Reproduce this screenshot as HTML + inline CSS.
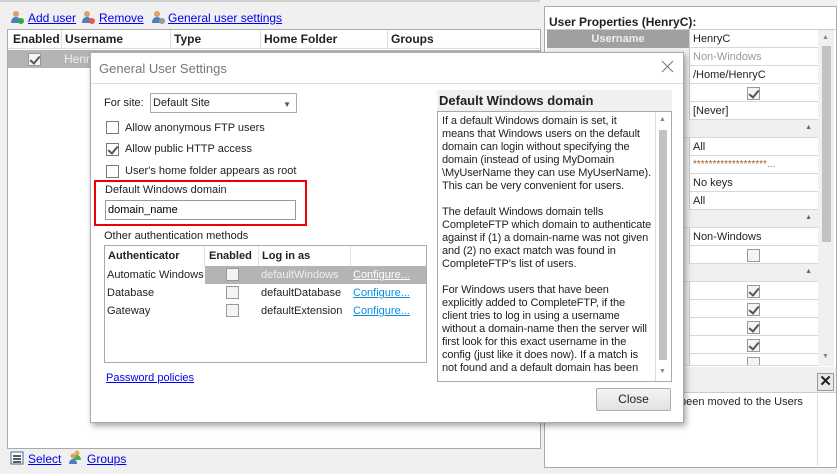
<!DOCTYPE html>
<html><head><meta charset="utf-8"><style>
*{box-sizing:border-box;margin:0;padding:0}
body{width:837px;height:474px;overflow:hidden;background:#f0f0f0;font-family:"Liberation Sans",Tahoma,sans-serif;font-size:11px;color:#222;position:relative}
.a{position:absolute}
a,.lnk{color:#0000ee;text-decoration:underline}
.cb{position:absolute;width:13px;height:13px;border:1px solid #7a7a7a;background:#fff}
.cb.g{border-color:#999;background:#f4f4f4}
.ck::after{content:"";position:absolute;left:3px;top:0px;width:4px;height:8px;border:solid #555;border-width:0 2px 2px 0;transform:rotate(40deg)}
.row{position:absolute;left:547px;width:271px;height:18px;border-bottom:1px solid #d8d8d8}
.row .k{position:absolute;left:0;top:0;width:143px;height:18px;background:#f0f0f0;border-right:1px solid #ccc}
.row .v{position:absolute;left:146px;top:3px}
.row.h{background:#f0f0f0}
.row.h::after{content:"▲";position:absolute;right:6px;top:4px;font-size:7px;color:#666}
.ico{position:absolute;width:14px;height:14px}
</style></head><body>
<div class="a" style="left:0;top:0;width:540px;height:2px;background:#d0d0d0"></div>
<svg class="ico" style="left:10px;top:10px" viewBox="0 0 14 14"><circle cx="6" cy="4" r="3" fill="#d9a070"/><path d="M1 13c0-4 2-6 5-6s5 2 5 6z" fill="#4a7fc0"/><circle cx="11" cy="11" r="3" fill="#3a3"/></svg>
<span class="a lnk" style="left:28px;top:11px;font-size:12px">Add user</span>
<svg class="ico" style="left:81px;top:10px" viewBox="0 0 14 14"><circle cx="6" cy="4" r="3" fill="#d9a070"/><path d="M1 13c0-4 2-6 5-6s5 2 5 6z" fill="#4a7fc0"/><circle cx="11" cy="11" r="3" fill="#e55"/></svg>
<span class="a lnk" style="left:99px;top:11px;font-size:12px">Remove</span>
<svg class="ico" style="left:151px;top:10px" viewBox="0 0 14 14"><circle cx="6" cy="4" r="3" fill="#d9a070"/><path d="M1 13c0-4 2-6 5-6s5 2 5 6z" fill="#4a7fc0"/><circle cx="11" cy="11" r="3" fill="#999"/></svg>
<span class="a lnk" style="left:168px;top:11px;font-size:12px">General user settings</span>
<div class="a" style="left:7px;top:29px;width:534px;height:420px;border:1px solid #aaa;background:#fff"></div>
<div class="a" style="left:8px;top:30px;width:532px;height:19px;background:#fff;border-bottom:1px solid #ddd;font-weight:bold;font-size:12px">
<span class="a" style="left:5px;top:2px">Enabled</span><span class="a" style="left:57px;top:2px">Username</span><span class="a" style="left:166px;top:2px">Type</span><span class="a" style="left:256px;top:2px">Home Folder</span><span class="a" style="left:383px;top:2px">Groups</span>
<div class="a" style="left:53px;top:0;width:1px;height:19px;background:#ddd"></div><div class="a" style="left:162px;top:0;width:1px;height:19px;background:#ddd"></div><div class="a" style="left:252px;top:0;width:1px;height:19px;background:#ddd"></div><div class="a" style="left:379px;top:0;width:1px;height:19px;background:#ddd"></div>
</div>
<div class="a" style="left:8px;top:50px;width:532px;height:18px;background:#b4b4b4"></div>
<div class="cb g ck" style="left:28px;top:53px"></div>
<span class="a" style="left:64px;top:52px;color:#eee;font-size:12px">HenryC</span>
<svg class="ico" style="left:10px;top:451px" viewBox="0 0 14 14"><rect x="1" y="1" width="12" height="12" fill="#fff" stroke="#3a6ea5"/><path d="M3 5h8M3 8h8M3 11h8" stroke="#222" stroke-width="1.5"/></svg>
<span class="a lnk" style="left:28px;top:452px;font-size:12px">Select</span>
<svg class="ico" style="left:68px;top:450px" viewBox="0 0 14 14"><circle cx="9" cy="3" r="2.5" fill="#e0b050"/><path d="M5 10c0-3 2-5 4-5s4 2 4 5z" fill="#5a5"/><circle cx="5" cy="6" r="2.5" fill="#d9a070"/><path d="M1 14c0-3 2-5 4-5s4 2 4 5z" fill="#4a7fc0"/></svg>
<span class="a lnk" style="left:87px;top:452px;font-size:12px">Groups</span>
<div class="a" style="left:544px;top:6px;width:293px;height:462px;border:1px solid #aaa;background:#fff"></div>
<span class="a" style="left:549px;top:15px;font-weight:bold;font-size:12px">User Properties (HenryC):</span>
<div class="a" style="left:546px;top:29px;width:290px;height:338px;border-top:1px solid #ccc;background:#fff"></div>
<div class="row"style="top:30px"><div class="k" style="background:#a0a0a0;color:#eee;font-weight:bold;text-align:center;padding-top:3px">Username</div><span class="v">HenryC</span></div>
<div class="row"style="top:48px"><div class="k"></div><span class="v" style="color:#999">Non-Windows</span></div>
<div class="row"style="top:66px"><div class="k"></div><span class="v">/Home/HenryC</span></div>
<div class="row"style="top:84px"><div class="k"></div><div class="cb g ck" style="left:200px;top:3px"></div></div>
<div class="row"style="top:102px"><div class="k"></div><span class="v">[Never]</span></div>
<div class="row h"style="top:120px"></div>
<div class="row"style="top:138px"><div class="k"></div><span class="v">All</span></div>
<div class="row"style="top:156px"><div class="k"></div><span class="v" style="color:#a06030;font-size:10px;top:3px">*******************...</span></div>
<div class="row"style="top:174px"><div class="k"></div><span class="v">No keys</span></div>
<div class="row"style="top:192px"><div class="k"></div><span class="v">All</span></div>
<div class="row h"style="top:210px"></div>
<div class="row"style="top:228px"><div class="k"></div><span class="v">Non-Windows</span></div>
<div class="row"style="top:246px"><div class="k"></div><div class="cb g" style="left:200px;top:3px"></div></div>
<div class="row h"style="top:264px"></div>
<div class="row"style="top:282px"><div class="k"></div><div class="cb g ck" style="left:200px;top:3px"></div></div>
<div class="row"style="top:300px"><div class="k"></div><div class="cb g ck" style="left:200px;top:3px"></div></div>
<div class="row"style="top:318px"><div class="k"></div><div class="cb g ck" style="left:200px;top:3px"></div></div>
<div class="row"style="top:336px"><div class="k"></div><div class="cb g ck" style="left:200px;top:3px"></div></div>
<div class="row"style="top:354px;height:12px;overflow:hidden"><div class="k"></div><div class="cb g" style="left:200px;top:3px"></div></div>
<div class="a" style="left:818px;top:30px;width:16px;height:336px;background:#f0f0f0"></div>
<div class="a" style="left:822px;top:46px;width:9px;height:196px;background:#c2c2c2"></div>
<span class="a" style="left:822px;top:34px;font-size:7px;color:#888">▲</span><span class="a" style="left:822px;top:353px;font-size:7px;color:#888">▼</span>
<div class="a" style="left:545px;top:367px;width:291px;height:5px;background:#f0f0f0"></div>
<div class="a" style="left:545px;top:372px;width:291px;height:21px;background:#f0f0f0;border-bottom:1px solid #ccc"></div>
<span class="a" style="left:678px;top:376px;font-weight:bold">s</span>
<div class="a" style="left:817px;top:373px;width:17px;height:18px;border:1px solid #999;background:#e8e8e8;text-align:center;font-weight:bold;font-size:15px;line-height:16px">✕</div>
<span class="a" style="left:680px;top:396px">been moved to the Users</span>
<div class="a" style="left:817px;top:394px;width:1px;height:72px;background:#ddd"></div>
<div class="a" style="left:90px;top:52px;width:594px;height:371px;background:#fff;border:1px solid #aaa;box-shadow:2px 3px 6px rgba(0,0,0,.35)">
<span class="a" style="left:8px;top:8px;font-size:13px;color:#777">General User Settings</span>
<svg class="a" style="left:570px;top:7px" width="13" height="13" viewBox="0 0 13 13"><path d="M1 1L12 12M12 1L1 12" stroke="#777" stroke-width="1"/></svg>
<div class="a" style="left:0;top:30px;width:592px;height:1px;background:#ddd"></div>
<span class="a" style="left:13px;top:44px">For site:</span>
<div class="a" style="left:59px;top:40px;width:147px;height:20px;border:1px solid #aaa;padding:3px 2px">Default Site<span class="a" style="right:5px;top:6px;font-size:8px;color:#555">▼</span></div>
<div class="cb" style="left:15px;top:68px"></div><span class="a" style="left:34px;top:69px">Allow anonymous FTP users</span>
<div class="cb ck" style="left:15px;top:90px"></div><span class="a" style="left:34px;top:90px">Allow public HTTP access</span>
<div class="cb" style="left:15px;top:112px"></div><span class="a" style="left:34px;top:112px">User's home folder appears as root</span>
<div class="a" style="left:3px;top:127px;width:213px;height:46px;border:2px solid #e00"></div>
<span class="a" style="left:14px;top:131px">Default Windows domain</span>
<div class="a" style="left:14px;top:147px;width:191px;height:20px;border:1px solid #999;padding:3px 2px;color:#000">domain_name</div>
<span class="a" style="left:13px;top:177px">Other authentication methods</span>
<div class="a" style="left:13px;top:192px;width:323px;height:118px;border:1px solid #aaa"></div>
<div class="a" style="left:14px;top:193px;width:321px;height:20px;font-weight:bold">
<span class="a" style="left:3px;top:4px">Authenticator</span><span class="a" style="left:104px;top:4px">Enabled</span><span class="a" style="left:157px;top:4px">Log in as</span>
<div class="a" style="left:99px;top:0;width:1px;height:20px;background:#e0e0e0"></div><div class="a" style="left:153px;top:0;width:1px;height:20px;background:#e0e0e0"></div><div class="a" style="left:245px;top:0;width:1px;height:20px;background:#e0e0e0"></div>
</div>
<div class="a" style="left:114px;top:213px;width:221px;height:18px;background:#b4b4b4"></div>
<span class="a" style="left:16px;top:216px">Automatic Windows</span><div class="cb g" style="left:135px;top:215px"></div><span class="a" style="left:170px;top:216px;color:#eee">defaultWindows</span><span class="a" style="left:262px;top:216px;color:#fff;text-decoration:underline">Configure...</span>
<span class="a" style="left:16px;top:234px">Database</span><div class="cb g" style="left:135px;top:233px"></div><span class="a" style="left:170px;top:234px">defaultDatabase</span><span class="a" style="left:262px;top:234px;color:#0a8ee0;text-decoration:underline">Configure...</span>
<span class="a" style="left:16px;top:252px">Gateway</span><div class="cb g" style="left:135px;top:251px"></div><span class="a" style="left:170px;top:252px">defaultExtension</span><span class="a" style="left:262px;top:252px;color:#0a8ee0;text-decoration:underline">Configure...</span>
<span class="a lnk" style="left:15px;top:319px">Password policies</span>
<div class="a" style="left:346px;top:37px;width:235px;height:21px;background:#f0f0f0;font-weight:bold;font-size:13px;padding:3px 2px">Default Windows domain</div>
<div class="a" style="left:346px;top:58px;width:235px;height:271px;border:1px solid #aaa;background:#fff;overflow:hidden">
<div style="position:absolute;left:4px;top:3px;width:214px;line-height:13px;font-size:11px;white-space:nowrap;overflow:hidden;letter-spacing:-0.1px">If a default Windows domain is set, it<br>means that Windows users on the default<br>domain can login without specifying the<br>domain (instead of using MyDomain<br>\MyUserName they can use MyUserName).<br>This can be very convenient for users.<br><br>The default Windows domain tells<br>CompleteFTP which domain to authenticate<br>against if (1) a domain-name was not given<br>and (2) no exact match was found in<br>CompleteFTP's list of users.<br><br>For Windows users that have been<br>explicitly added to CompleteFTP, if the<br>client tries to log in using a username<br>without a domain-name then the server will<br>first look for this exact username in the<br>config (just like it does now). If a match is<br>not found and a default domain has been</div>
<div class="a" style="left:217px;top:0;width:16px;height:269px;background:#fff;border-left:1px solid #ddd"></div>
<div class="a" style="left:221px;top:18px;width:8px;height:230px;background:#c2c2c2"></div>
<span class="a" style="left:221px;top:4px;font-size:7px;color:#888">▲</span><span class="a" style="left:221px;top:256px;font-size:7px;color:#888">▼</span>
</div>
<div class="a" style="left:505px;top:335px;width:75px;height:23px;border:1px solid #adadad;border-radius:2px;background:linear-gradient(#f4f4f4,#e2e2e2);text-align:center;line-height:21px;font-size:12px">Close</div>
</div>
</body></html>
